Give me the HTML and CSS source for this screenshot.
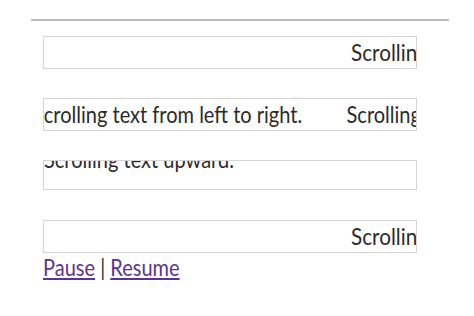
FILE: index.html
```html
<!DOCTYPE html>
<html lang="en">
<head>
    <meta charset="UTF-8">
    <title>Scrolling Text</title>
    <link rel="stylesheet" href="styles.css">
</head>
<body>
    <div class="page">
        <hr class="rule">
        <div class="ticker first">
            <div class="track"><span>Scrolling text from right to left.</span></div>
        </div>
        <div class="ticker second">
            <div class="track"><span>Scrolling text from left to right.</span><span>Scrolling text from left to right.</span></div>
        </div>
        <div class="ticker third">
            <div class="track"><span>Scrolling text upward.</span></div>
        </div>
        <div class="ticker fourth">
            <div class="track"><span>Scrolling text from right to left.</span></div>
        </div>
        <div class="controls">
            <a href="#">Pause</a> | <a href="#">Resume</a>
        </div>
    </div>
</body>
</html>
```

FILE: styles.css
```css
body {
    margin: 0;
    background: white;
    font-family: Lato, 'Liberation Sans', sans-serif;
    color: #2b2b2b;
}
.page {
    padding: 19px 57px 0 43px;
}
.rule {
    margin: 0 -32px 15px -12px;
    border: none;
    border-top: 2px solid #bbb;
}
.ticker {
    height: 31px;
    border: 1px solid #d4d4d4;
    overflow: hidden;
    position: relative;
    margin-bottom: 29px;
}
.third {
    height: 28px;
    margin-bottom: 30px;
}
.fourth {
    margin-bottom: 1px;
}
.track {
    position: absolute;
    white-space: nowrap;
    font-size: 23px;
    line-height: 31px;
    transform: scaleX(0.87);
    transform-origin: 0 0;
}
.track span {
    margin-right: 51px;
}
.first .track, .fourth .track {
    left: 307px;
    transform: scaleX(0.9);
}
.second .track {
    left: -11px;
}
.third .track {
    left: 0;
    top: -17px;
}
.controls {
    font-size: 23px;
    line-height: 27px;
    color: #1d3535;
    transform: scaleX(0.87);
    transform-origin: 0 0;
}
.controls a {
    color: #5e3390;
}
```
